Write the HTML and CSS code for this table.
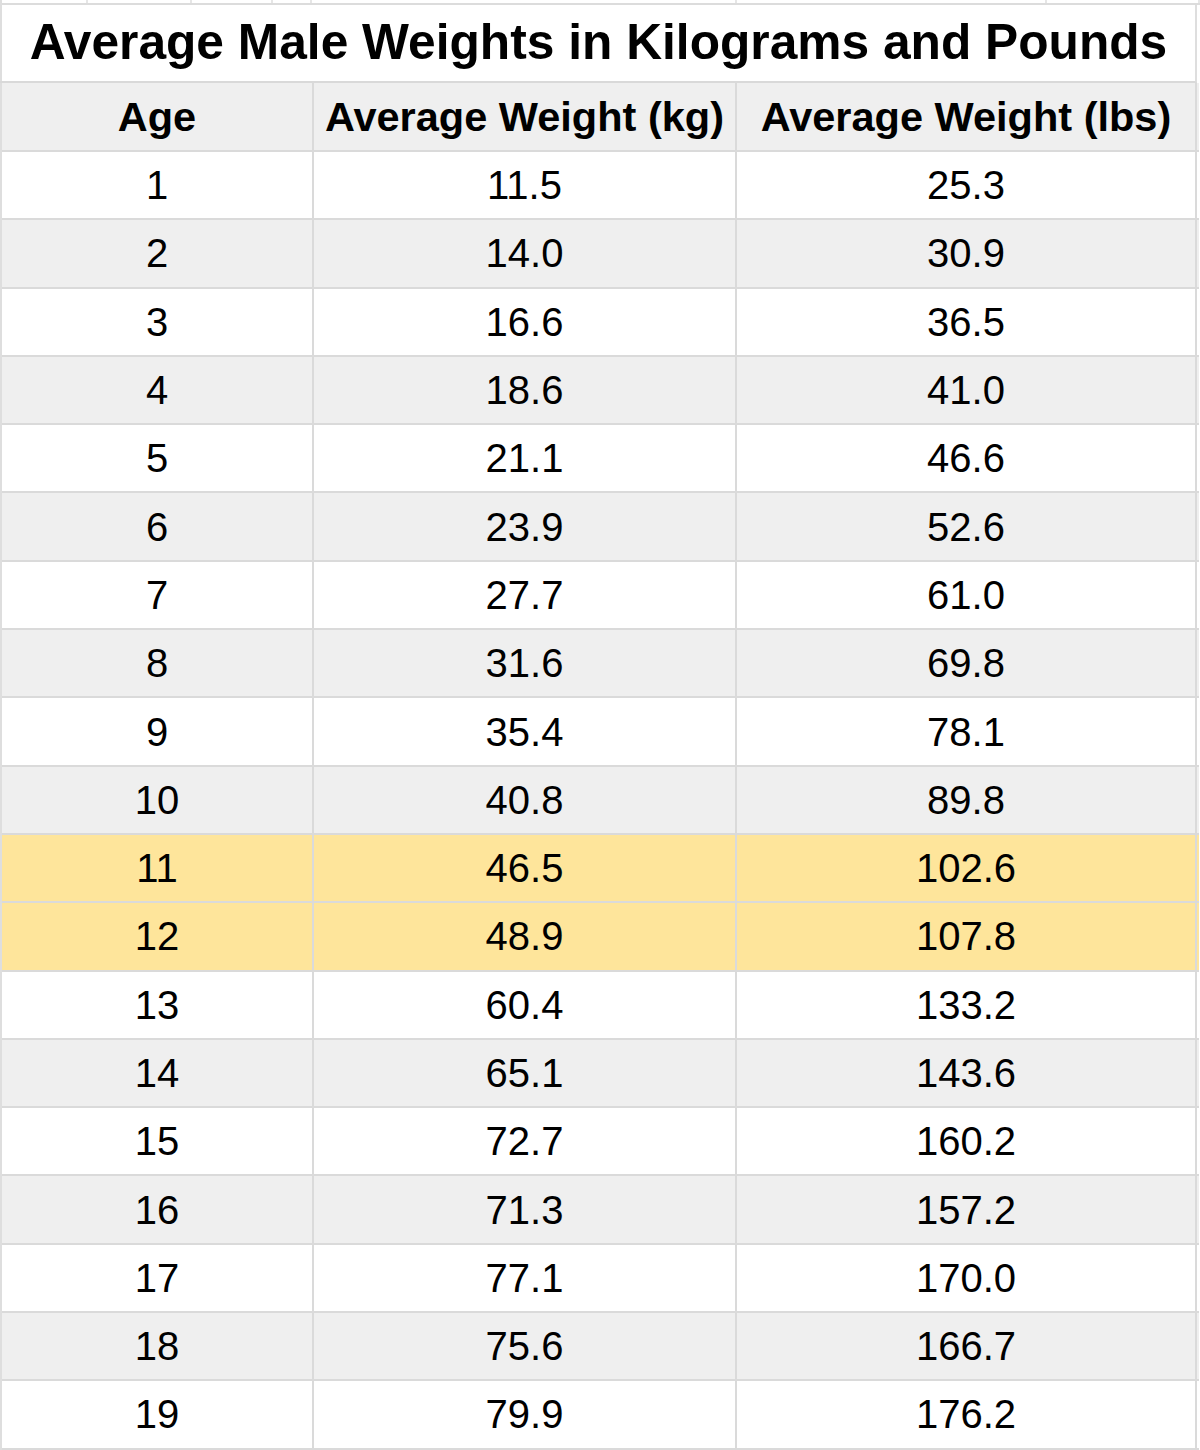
FILE: index.html
```html
<!DOCTYPE html>
<html>
<head>
<meta charset="utf-8">
<title>Average Male Weights</title>
<link rel="stylesheet" href="styles.css">
</head>
<body>
<div class="sheet">
  <div class="strip">
    <span class="sc w88"></span><span class="sc w104"></span><span class="sc w81"></span><span class="sc w39"></span><span class="sc w425"></span><span class="sc w310"></span><span class="sc wrest"></span>
  </div>
  <div class="title">Average Male Weights in Kilograms and Pounds</div>
  <div class="row head">
    <div class="cell">Age</div>
    <div class="cell">Average Weight (kg)</div>
    <div class="cell">Average Weight (lbs)</div>
  </div>
  <div class="row"><div class="cell">1</div><div class="cell">11.5</div><div class="cell">25.3</div></div>
  <div class="row alt"><div class="cell">2</div><div class="cell">14.0</div><div class="cell">30.9</div></div>
  <div class="row"><div class="cell">3</div><div class="cell">16.6</div><div class="cell">36.5</div></div>
  <div class="row alt"><div class="cell">4</div><div class="cell">18.6</div><div class="cell">41.0</div></div>
  <div class="row"><div class="cell">5</div><div class="cell">21.1</div><div class="cell">46.6</div></div>
  <div class="row alt"><div class="cell">6</div><div class="cell">23.9</div><div class="cell">52.6</div></div>
  <div class="row"><div class="cell">7</div><div class="cell">27.7</div><div class="cell">61.0</div></div>
  <div class="row alt"><div class="cell">8</div><div class="cell">31.6</div><div class="cell">69.8</div></div>
  <div class="row"><div class="cell">9</div><div class="cell">35.4</div><div class="cell">78.1</div></div>
  <div class="row alt"><div class="cell">10</div><div class="cell">40.8</div><div class="cell">89.8</div></div>
  <div class="row hl"><div class="cell">11</div><div class="cell">46.5</div><div class="cell">102.6</div></div>
  <div class="row hl"><div class="cell">12</div><div class="cell">48.9</div><div class="cell">107.8</div></div>
  <div class="row"><div class="cell">13</div><div class="cell">60.4</div><div class="cell">133.2</div></div>
  <div class="row alt"><div class="cell">14</div><div class="cell">65.1</div><div class="cell">143.6</div></div>
  <div class="row"><div class="cell">15</div><div class="cell">72.7</div><div class="cell">160.2</div></div>
  <div class="row alt"><div class="cell">16</div><div class="cell">71.3</div><div class="cell">157.2</div></div>
  <div class="row"><div class="cell">17</div><div class="cell">77.1</div><div class="cell">170.0</div></div>
  <div class="row alt"><div class="cell">18</div><div class="cell">75.6</div><div class="cell">166.7</div></div>
  <div class="row"><div class="cell">19</div><div class="cell">79.9</div><div class="cell">176.2</div></div>
</div>
</body>
</html>
```

FILE: styles.css
```css
html, body {
  margin: 0;
  padding: 0;
  background: #ffffff;
}

body {
  font-family: "Liberation Sans", Arial, sans-serif;
  color: #000000;
}

.sheet {
  width: 1200px;
  border-left: 2px solid #dedede;
  box-sizing: border-box;
}

.strip {
  display: flex;
  height: 5px;
  border-bottom: 2px solid #dcdcdc;
  box-sizing: border-box;
}

.sc {
  display: block;
  height: 100%;
  border-right: 2px solid #e6e6e6;
  box-sizing: border-box;
}
.w88 { width: 86px; }
.w104 { width: 104px; }
.w81 { width: 81px; }
.w39 { width: 39px; }
.w425 { width: 425px; }
.w310 { width: 310px; }
.wrest { flex: 1; }

.title {
  height: 78px;
  box-sizing: border-box;
  border-bottom: 2px solid #d9d9d9;
  border-right: 2px solid #dedede;
  width: 1197px;
  margin-left: -2px;
  padding-left: 2px;
  display: flex;
  align-items: center;
  justify-content: center;
  font-weight: bold;
  font-size: 49.7px;
  padding-bottom: 2px;
}

.row {
  display: grid;
  grid-template-columns: 312px 423px 460px;
  height: 68.3px;
  box-sizing: border-box;
  border-bottom: 2px solid #dadada;
  width: 1197px;
  background: #ffffff;
}

.row.head {
  height: 69px;
  background: #efefef;
  font-weight: bold;
}

.row.alt {
  background: #efefef;
}

.row.hl {
  background: #fee59b;
}

.cell {
  display: flex;
  align-items: center;
  justify-content: center;
  border-right: 2px solid #dadada;
  font-size: 40px;
  line-height: 1;
}

.row.head .cell {
  font-size: 41.5px;
}
```
